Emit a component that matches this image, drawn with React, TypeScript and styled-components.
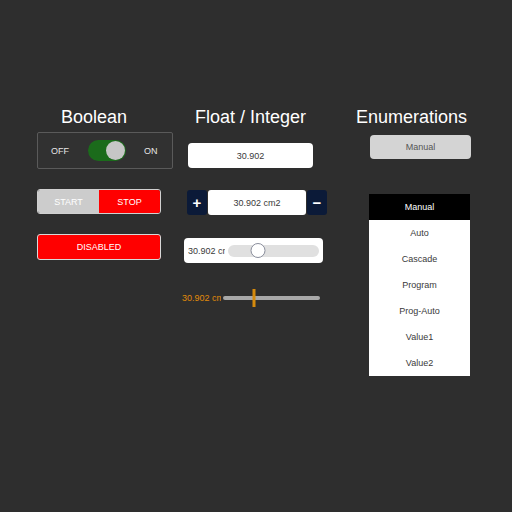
import React from 'react';
import styled, { createGlobalStyle } from 'styled-components';

// Estilos globales de la página
const GlobalStyle = createGlobalStyle`
  html, body {
    margin: 0;
    padding: 0;
    background: #2e2e2e;
    font-family: "Liberation Sans", Arial, sans-serif;
  }
`;

const Page = styled.div`
  width: 512px;
  height: 512px;
  padding: 107px 0 0 36px;
  box-sizing: border-box;
  display: flex;
`;

const Column = styled.div<{ $width: number }>`
  width: ${(p) => p.$width}px;
  display: flex;
  flex-direction: column;
  align-items: flex-start;
`;

const Title = styled.h2<{ $ml: number }>`
  margin: 0 0 0 ${(p) => p.$ml}px;
  font-size: 18px;
  line-height: 20px;
  font-weight: normal;
  color: #ffffff;
  white-space: nowrap;
`;

// --- Boolean ---
const ToggleBox = styled.div`
  margin: 5px 0 0 1px;
  width: 136px;
  height: 37px;
  box-sizing: border-box;
  border: 1px solid #5a5a5a;
  border-radius: 2px;
  background: #313131;
  display: flex;
  align-items: center;
  padding-left: 13px;
`;

const ToggleLabel = styled.span<{ $ml?: number }>`
  margin-left: ${(p) => p.$ml ?? 0}px;
  font-size: 9px;
  color: #e6e6e6;
`;

const Switch = styled.div`
  margin-left: 19px;
  width: 38px;
  height: 21px;
  border-radius: 11px;
  background: #1b6b1b;
  display: flex;
  align-items: center;
  justify-content: flex-end;
  padding-right: 1px;
  box-sizing: border-box;
`;

const Knob = styled.div`
  width: 19px;
  height: 19px;
  border-radius: 50%;
  background: #c6c6c6;
`;

const Segmented = styled.div`
  margin: 20px 0 0 1px;
  width: 124px;
  height: 25px;
  display: flex;
  border: 1px solid #d0d0d0;
  border-radius: 3px;
  overflow: hidden;
  box-sizing: border-box;
`;

const Segment = styled.div<{ $active: boolean }>`
  flex: 1;
  display: flex;
  align-items: center;
  justify-content: center;
  font-size: 9px;
  color: #ffffff;
  background: ${(p) => (p.$active ? '#ff0000' : '#cccccc')};
`;

const DisabledButton = styled.div`
  margin: 20px 0 0 1px;
  width: 124px;
  height: 26px;
  box-sizing: border-box;
  border: 1px solid #d8d8d8;
  border-radius: 3px;
  background: #ff0000;
  color: #ffffff;
  font-size: 9px;
  display: flex;
  align-items: center;
  justify-content: center;
`;

// --- Float / Integer ---
const ValueBox = styled.div`
  margin: 16px 0 0 7px;
  width: 125px;
  height: 25px;
  border-radius: 4px;
  background: #ffffff;
  color: #3a3a3a;
  font-size: 9px;
  display: flex;
  align-items: center;
  justify-content: center;
`;

const Spinner = styled.div`
  margin: 22px 0 0 6px;
  height: 25px;
  display: flex;
  gap: 1px;
`;

const SpinButton = styled.div`
  width: 20px;
  height: 25px;
  border-radius: 3px;
  background: #0b1a38;
  color: #ffffff;
  font-size: 15px;
  font-weight: bold;
  display: flex;
  align-items: center;
  justify-content: center;
`;

const SpinValue = styled.div`
  width: 98px;
  height: 25px;
  border-radius: 3px;
  background: #ffffff;
  color: #3a3a3a;
  font-size: 9px;
  display: flex;
  align-items: center;
  justify-content: center;
`;

const SliderBox = styled.div`
  margin: 23px 0 0 3px;
  width: 139px;
  height: 25px;
  border-radius: 4px;
  background: #ffffff;
  display: flex;
  align-items: center;
  padding-left: 4px;
  box-sizing: border-box;
`;

// El texto se recorta a propósito, igual que en la captura
const SliderLabel = styled.span<{ $width: number; $gap: number; $color: string }>`
  width: ${(p) => p.$width}px;
  margin-right: ${(p) => p.$gap}px;
  overflow: hidden;
  white-space: nowrap;
  font-size: 9px;
  color: ${(p) => p.$color};
`;

const PillTrack = styled.div`
  position: relative;
  width: 91px;
  height: 12px;
  border-radius: 6px;
  background: #e0e0e0;
`;

const RoundThumb = styled.div`
  position: absolute;
  top: -2px;
  width: 13px;
  height: 13px;
  border-radius: 50%;
  background: #ffffff;
  border: 1.5px solid #8a8e9c;
  transform: translateX(-50%);
`;

const LineSlider = styled.div`
  margin: 26px 0 0 1px;
  height: 18px;
  display: flex;
  align-items: center;
`;

const LineTrack = styled.div`
  position: relative;
  width: 97px;
  height: 4px;
  border-radius: 2px;
  background: #a8a8a8;
`;

const BarThumb = styled.div`
  position: absolute;
  top: -7px;
  width: 3px;
  height: 18px;
  background: #d58a0c;
  transform: translateX(-50%);
`;

// --- Enumerations ---
const EnumButton = styled.div`
  margin: 8px 0 0 15px;
  width: 101px;
  height: 24px;
  border-radius: 4px;
  background: #d4d4d4;
  color: #555555;
  font-size: 9px;
  display: flex;
  align-items: center;
  justify-content: center;
`;

const EnumList = styled.ul`
  margin: 35px 0 0 14px;
  padding: 0;
  list-style: none;
  width: 101px;
  background: #ffffff;
`;

const EnumItem = styled.li<{ $selected: boolean }>`
  height: 26px;
  display: flex;
  align-items: center;
  justify-content: center;
  font-size: 9px;
  background: ${(p) => (p.$selected ? '#000000' : '#ffffff')};
  color: ${(p) => (p.$selected ? '#ffffff' : '#3a3a3a')};
`;

const options = ['Manual', 'Auto', 'Cascade', 'Program', 'Prog-Auto', 'Value1', 'Value2'];

const App: React.FC = () => {
  const sliderPos = 30;
  return (
    <>
      <GlobalStyle />
      <Page>
        <Column $width={145}>
          <Title $ml={25}>Boolean</Title>
          <ToggleBox>
            <ToggleLabel>OFF</ToggleLabel>
            <Switch>
              <Knob />
            </Switch>
            <ToggleLabel $ml={18}>ON</ToggleLabel>
          </ToggleBox>
          <Segmented>
            <Segment $active={false}>START</Segment>
            <Segment $active>STOP</Segment>
          </Segmented>
          <DisabledButton>DISABLED</DisabledButton>
        </Column>

        <Column $width={174}>
          <Title $ml={14}>Float / Integer</Title>
          <ValueBox>30.902</ValueBox>
          <Spinner>
            <SpinButton>+</SpinButton>
            <SpinValue>30.902 cm2</SpinValue>
            <SpinButton>−</SpinButton>
          </Spinner>
          <SliderBox>
            <SliderLabel $width={37} $gap={3} $color="#3a3a3a">30.902 cm2</SliderLabel>
            <PillTrack>
              <RoundThumb style={{ left: sliderPos }} />
            </PillTrack>
          </SliderBox>
          <LineSlider>
            <SliderLabel $width={39} $gap={2} $color="#e08a0a">30.902 cm2</SliderLabel>
            <LineTrack>
              <BarThumb style={{ left: sliderPos + 1 }} />
            </LineTrack>
          </LineSlider>
        </Column>

        <Column $width={130}>
          <Title $ml={1}>Enumerations</Title>
          <EnumButton>Manual</EnumButton>
          <EnumList>
            {options.map((o, i) => (
              <EnumItem key={o} $selected={i === 0}>
                {o}
              </EnumItem>
            ))}
          </EnumList>
        </Column>
      </Page>
    </>
  );
};

export default App;
